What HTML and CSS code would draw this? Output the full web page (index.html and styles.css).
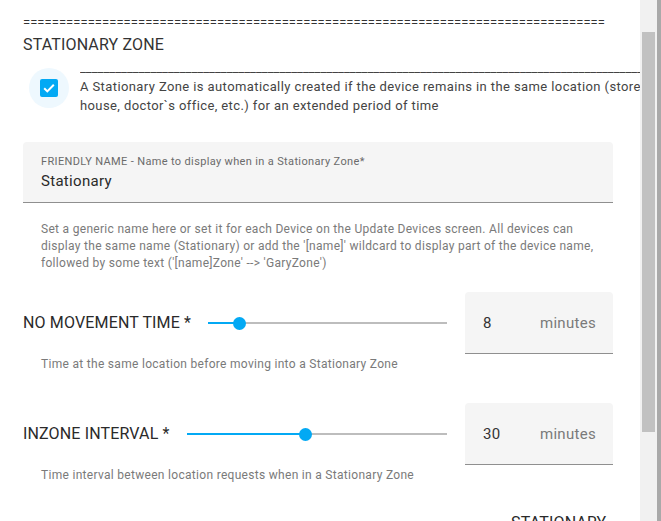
FILE: index.html
```html
<!DOCTYPE html>
<html>
<head>
  <meta http-equiv="content-type" content="text/html; charset=UTF-8" />
  <title>Stationary Zone</title>
  <link rel="stylesheet" href="styles.css">
</head>
<body>
<div class="dialog">
  <div class="section">
    <div class="rule">=================================================================================</div>
    <div class="title">STATIONARY ZONE</div>

    <div class="check-row">
      <div class="halo">
        <span class="checkbox">
          <svg width="18" height="18" viewBox="0 0 18 18"><path d="M4.2 9.3l3.1 3.1 6.5-6.6" fill="none" stroke="#fff" stroke-width="2"/></svg>
        </span>
      </div>
      <div class="check-text">
        <div class="dashes">________________________________________________________________________________________________________________________</div>
        A Stationary Zone is automatically created if the device remains in the same location (store, friend's house, doctor`s office, etc.) for an extended period of time
      </div>
    </div>

    <div class="field">
      <div class="field-label">FRIENDLY NAME - Name to display when in a Stationary Zone*</div>
      <div class="field-value">Stationary</div>
    </div>
    <div class="helper helper-block">
      Set a generic name here or set it for each Device on the Update Devices screen. All devices can
      display the same name (Stationary) or add the '[name]' wildcard to display part of the device name,
      followed by some text ('[name]Zone' --&gt; 'GaryZone')
    </div>

    <div class="slider-row first-row">
      <span class="row-label">NO MOVEMENT TIME *</span>
      <div class="slider">
        <div class="track-on" style="width: 13.3%;"></div>
        <span class="knob"></span>
        <div class="track-off"></div>
      </div>
      <div class="num-box">
        <span class="num">8</span>
        <span class="unit">minutes</span>
      </div>
    </div>
    <div class="helper row-helper">Time at the same location before moving into a Stationary Zone</div>

    <div class="slider-row">
      <span class="row-label">INZONE INTERVAL *</span>
      <div class="slider">
        <div class="track-on" style="width: 45.5%;"></div>
        <span class="knob"></span>
        <div class="track-off"></div>
      </div>
      <div class="num-box">
        <span class="num">30</span>
        <span class="unit">minutes</span>
      </div>
    </div>
    <div class="helper row-helper">Time interval between location requests when in a Stationary Zone</div>

    <div class="next-title">STATIONARY ZONE</div>
  </div>
</div>
<div class="scrollbar">
  <div class="thumb"></div>
</div>
</body>
</html>
```

FILE: styles.css
```css
html, body {
  margin: 0;
  height: 100%;
}
body {
  display: flex;
  background-color: #a9a9a9;
  font-family: Roboto, "Liberation Sans", sans-serif;
  color: #212121;
}

.dialog {
  width: 640px;
  height: 521px;
  overflow: hidden;
  background-color: #fff;
}
.scrollbar {
  width: 17px;
  height: 521px;
  background-color: #f1f1f1;
}
.thumb {
  height: 400px;
  margin: 32px 2px 0 2px;
  background-color: #c1c1c1;
}

.section {
  padding: 15px 27px 0 23px;
}

.rule {
  font-size: 13px;
  line-height: 16px;
  height: 16px;
  white-space: nowrap;
  letter-spacing: 0.05px;
  color: #333;
}
.title {
  margin-top: 5px;
  font-size: 16px;
  line-height: 18px;
  letter-spacing: 0.15px;
  color: #333;
}

.check-row {
  display: flex;
  align-items: flex-start;
  margin-top: 4px;
  padding-left: 6px;
}
.halo {
  flex: none;
  display: flex;
  align-items: center;
  justify-content: center;
  width: 40px;
  height: 40px;
  margin-top: 10px;
  margin-right: 11px;
  border-radius: 50%;
  background-color: #eef8fe;
}
.checkbox {
  display: block;
  width: 18px;
  height: 18px;
  border-radius: 2px;
  background-color: #03a9f4;
}
.checkbox svg {
  display: block;
}
.check-text {
  flex: none;
  width: 640px;
  font-size: 13px;
  line-height: 19px;
  letter-spacing: 0.4px;
  color: #444;
}
.dashes {
  white-space: nowrap;
  overflow: hidden;
  letter-spacing: 0;
}

.field {
  box-sizing: border-box;
  height: 61px;
  margin-top: 27px;
  padding: 13px 18px 0 18px;
  background-color: #f5f5f5;
  border-radius: 4px 4px 0 0;
  border-bottom: 1px solid #8f8f8f;
}
.field-label {
  font-size: 11px;
  line-height: 14px;
  letter-spacing: 0.35px;
  color: #6b6b6b;
}
.field-value {
  margin-top: 2px;
  font-size: 15px;
  line-height: 20px;
  letter-spacing: 0.3px;
  color: #2a2a2a;
}

.helper {
  padding-left: 18px;
  font-size: 12px;
  line-height: 17px;
  letter-spacing: 0.3px;
  color: #7a7a7a;
}
.helper-block {
  margin-top: 18px;
}

.slider-row {
  display: flex;
  align-items: center;
  margin-top: 30px;
}
.first-row {
  margin-top: 20px;
}
.row-label {
  flex: none;
  font-size: 16px;
  line-height: 18px;
  letter-spacing: 0.15px;
  color: #2a2a2a;
}
.slider {
  flex: 1;
  display: flex;
  align-items: center;
  margin: 0 18px 0 17px;
  height: 14px;
}
.track-on {
  height: 2px;
  background-color: #03a9f4;
}
.track-off {
  flex: 1;
  height: 2px;
  background-color: #bdbdbd;
}
.knob {
  flex: none;
  width: 13px;
  height: 13px;
  margin: 0 -6.5px;
  border-radius: 50%;
  background-color: #03a9f4;
  position: relative;
}
.num-box {
  flex: none;
  box-sizing: border-box;
  display: flex;
  align-items: center;
  justify-content: space-between;
  width: 148px;
  height: 62px;
  padding: 0 17px 0 18px;
  background-color: #f5f5f5;
  border-radius: 4px 4px 0 0;
  border-bottom: 1px solid #8f8f8f;
  font-size: 15px;
  letter-spacing: 0.3px;
}
.num {
  color: #333;
}
.unit {
  color: #7a7a7a;
}
.row-helper {
  margin-top: 2px;
}

.next-title {
  margin-top: 30px;
  padding-left: 488px;
  font-size: 16px;
  line-height: 18px;
  letter-spacing: 0.15px;
  color: #2a2a2a;
}
```
